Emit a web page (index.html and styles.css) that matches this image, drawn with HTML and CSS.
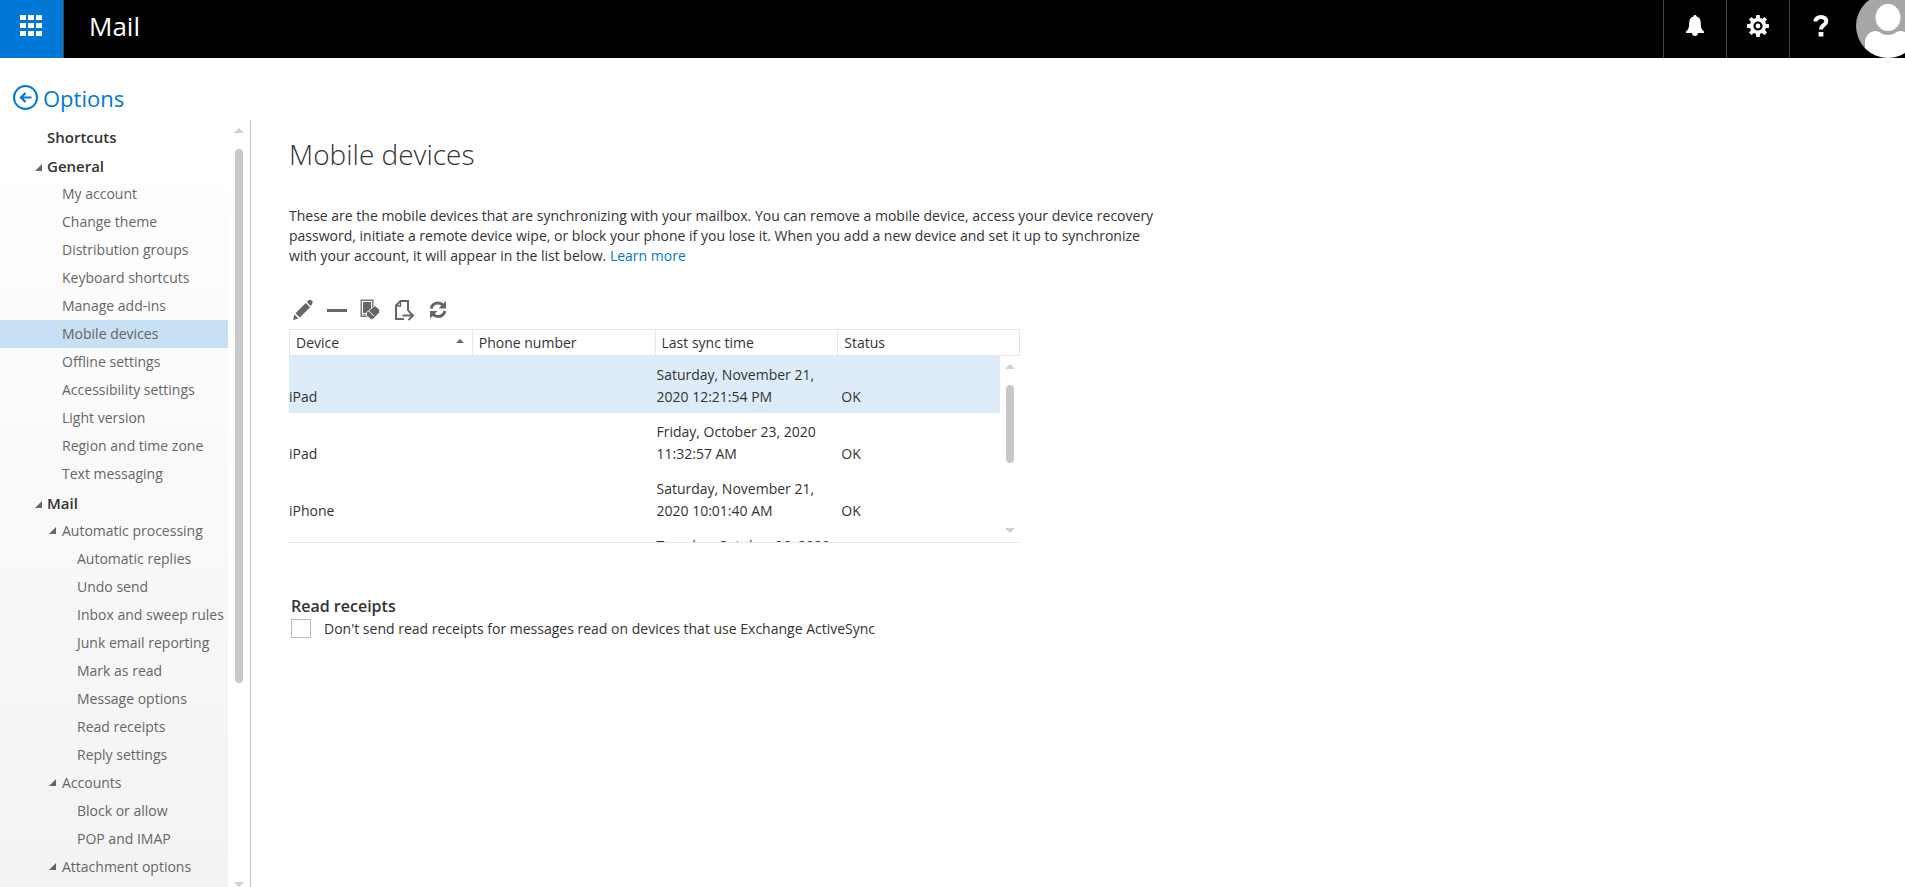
FILE: index.html
```html
<!DOCTYPE html>
<html lang="en">
<head>
  <meta charset="UTF-8">
  <title>Mail - Options</title>
  <meta name="viewport" content="width=device-width, initial-scale=1.0">
  <link rel="stylesheet" href="styles.css">
</head>
<body>
<header class="topbar">
  <button class="launcher" aria-label="App launcher">
    <svg width="23" height="22" viewBox="0 0 23 22" fill="#fff">
      <path d="M0 0h6v5H0zM8 0h6v5H8zM16 0h6v5h-6zM0 8h6v5H0zM8 8h6v5H8zM16 8h6v5h-6zM0 16h6v5H0zM8 16h6v5H8zM16 16h6v5h-6z"/>
    </svg>
  </button>
  <a class="brand" href="#">Mail</a>
  <div class="actions">
    <button class="action" aria-label="Notifications">
      <svg width="20" height="22" viewBox="0 0 20 22" fill="#fff">
        <path d="M10 0c1 0 1.600.7 1.600 1.600 2.800.8 4.200 3 4.200 6.200 0 4.700.8 7 3.200 8.600V18h-6a3 3 0 0 1-6 0H1v-1.600C3.400 14.800 4.200 12.500 4.200 7.800c0-3.200 1.400-5.400 4.200-6.200C8.400.7 9 0 10 0z"/>
      </svg>
    </button>
    <button class="action" aria-label="Settings">
      <svg width="22" height="22" viewBox="0 0 22 22">
        <g fill="#fff">
          <circle cx="11" cy="11" r="8.200"/>
          <path id="tooth" d="M8.800 4l.5-4h3.400l.5 4z"/>
          <use href="#tooth" transform="rotate(45 11 11)"/>
          <use href="#tooth" transform="rotate(90 11 11)"/>
          <use href="#tooth" transform="rotate(135 11 11)"/>
          <use href="#tooth" transform="rotate(180 11 11)"/>
          <use href="#tooth" transform="rotate(225 11 11)"/>
          <use href="#tooth" transform="rotate(270 11 11)"/>
          <use href="#tooth" transform="rotate(315 11 11)"/>
        </g>
        <circle cx="11" cy="11" r="3.500" fill="#fff" stroke="#000" stroke-width="2.200"/>
      </svg>
    </button>
    <button class="action" aria-label="Help">
      <svg width="16" height="22" viewBox="0 0 16 22">
        <path d="M2.500 6.500C2.500 3.500 5 2 8 2s5.300 1.500 5.300 4.500C13.300 10 8 10 8 14.500" fill="none" stroke="#fff" stroke-width="4"/>
        <path d="M5.600 17h4.800v4.500H5.600z" fill="#fff"/>
      </svg>
    </button>
    <button class="avatar" aria-label="Account">
      <svg width="64" height="64" viewBox="0 0 64 64">
        <circle cx="32" cy="32" r="32" fill="#a6a6a6"/>
        <ellipse cx="32" cy="23.500" rx="12.500" ry="13.500" fill="#fff"/>
        <path d="M9 54V49c0-7 4-12 11-12 3 0 6 4 12 4s9-4 12-4c7 0 11 5 11 12v5a32 32 0 0 1-46 0z" fill="#fff"/>
      </svg>
    </button>
  </div>
</header>

<a class="back" href="#">
  <svg width="25" height="25" viewBox="0 0 25 25" fill="none" stroke="#0078d7">
    <circle cx="12.500" cy="12.500" r="11.500" stroke-width="2"/>
    <path d="M18.500 12.500h-11M12.500 8l-4.500 4.500 4.500 4.500" stroke-width="2.200"/>
  </svg>
  <span>Options</span>
</a>

<div class="page">
  <aside class="sidebar">
    <nav class="nav">
      <a class="root" href="#">Shortcuts</a>
      <a class="root open" href="#">General</a>
      <div class="tree">
        <a href="#">My account</a>
        <a href="#">Change theme</a>
        <a href="#">Distribution groups</a>
        <a href="#">Keyboard shortcuts</a>
        <a href="#">Manage add-ins</a>
        <a class="selected" href="#">Mobile devices</a>
        <a href="#">Offline settings</a>
        <a href="#">Accessibility settings</a>
        <a href="#">Light version</a>
        <a href="#">Region and time zone</a>
        <a href="#">Text messaging</a>
        <a class="root open" href="#">Mail</a>
        <a class="open" href="#">Automatic processing</a>
        <a class="leaf" href="#">Automatic replies</a>
        <a class="leaf" href="#">Undo send</a>
        <a class="leaf" href="#">Inbox and sweep rules</a>
        <a class="leaf" href="#">Junk email reporting</a>
        <a class="leaf" href="#">Mark as read</a>
        <a class="leaf" href="#">Message options</a>
        <a class="leaf" href="#">Read receipts</a>
        <a class="leaf" href="#">Reply settings</a>
        <a class="open" href="#">Accounts</a>
        <a class="leaf" href="#">Block or allow</a>
        <a class="leaf" href="#">POP and IMAP</a>
        <a class="open" href="#">Attachment options</a>
      </div>
    </nav>
    <div class="scrollbar">
      <span class="up"></span>
      <span class="thumb"></span>
      <span class="down"></span>
    </div>
  </aside>

  <main class="content">
    <h1>Mobile devices</h1>
    <p class="intro">These are the mobile devices that are synchronizing with your mailbox. You can remove a mobile device, access your device recovery password, initiate a remote device wipe, or block your phone if you lose it. When you add a new device and set it up to synchronize with your account, it will appear in the list below. <a href="#">Learn more</a></p>

    <div class="toolbar">
      <button aria-label="Edit">
        <svg width="22" height="22" viewBox="0 0 22 22" fill="#666">
          <path d="M1 21l1.500-5.500 4 4zM3.500 14.200L13.800 4l4.300 4.200L7.800 18.500zM14.800 3l1.800-1.700c1-1 2.200-.8 3.200.2s1.200 2.300.2 3.300L19 7.200z"/>
        </svg>
      </button>
      <button aria-label="Remove">
        <svg width="22" height="22" viewBox="0 0 22 22" fill="#666"><path d="M1 10h20v3H1z"/></svg>
      </button>
      <button aria-label="Wipe device">
        <svg width="22" height="22" viewBox="0 0 22 22">
          <path d="M1.200 1.200h11.600v9L7 17.300H1.200z" fill="#fff" stroke="#777" stroke-width="1.400"/>
          <path d="M3 3h8v7l-4 4H3z" fill="#666"/>
          <path d="M3.500 15.500h2" stroke="#666"/>
          <path d="M15 6.500l4.500 4v3L13.500 20l-2.500.5-4.500-4V13.500z" fill="#666" stroke="#fff" stroke-width=".8"/>
          <path d="M8.500 11.700l5.500 5.500" stroke="#fff"/>
        </svg>
      </button>
      <button aria-label="Export">
        <svg width="22" height="22" viewBox="0 0 22 22" fill="none" stroke="#666" stroke-width="2">
          <path d="M14 12V2H6.500L2 6.500V20h8"/>
          <path d="M6.500 2.500v4.500H2.500" stroke-width="1.400"/>
          <path d="M8.500 16.500h10M14.500 12l4.500 4.500-4.500 4.500"/>
        </svg>
      </button>
      <button aria-label="Refresh">
        <svg width="22" height="22" viewBox="0 0 22 22">
          <path d="M3 9.500C4 6 6.500 4 10 4c2.500 0 4 1 5.500 2.500M17 12c-1 3.500-3.500 5.500-7 5.500-2.500 0-4-1-5.500-2.500" fill="none" stroke="#666" stroke-width="3"/>
          <path d="M18 2v7.500h-7.500zM2 19.500V12h7.500z" fill="#666"/>
        </svg>
      </button>
    </div>

    <div class="list">
      <table class="devices">
        <colgroup>
          <col class="col">
          <col class="col">
          <col class="col">
          <col>
          <col class="col-gutter">
        </colgroup>
        <thead>
          <tr>
            <th class="sorted" scope="col">Device</th>
            <th scope="col">Phone number</th>
            <th scope="col">Last sync time</th>
            <th scope="col" colspan="2">Status</th>
          </tr>
        </thead>
        <tbody>
          <tr class="selected"><td>iPad</td><td></td><td>Saturday, November 21, 2020 12:21:54 PM</td><td>OK</td><td class="gutter"></td></tr>
          <tr><td>iPad</td><td></td><td>Friday, October 23, 2020 11:32:57 AM</td><td>OK</td><td class="gutter"></td></tr>
          <tr><td>iPhone</td><td></td><td>Saturday, November 21, 2020 10:01:40 AM</td><td>OK</td><td class="gutter"></td></tr>
          <tr><td></td><td></td><td>Tuesday, October 06, 2020</td><td></td><td class="gutter"></td></tr>
        </tbody>
      </table>
      <div class="scrollbar list-scroll">
        <span class="up"></span>
        <span class="thumb"></span>
        <span class="down"></span>
      </div>
    </div>

    <section class="receipts">
      <h2>Read receipts</h2>
      <div class="check">
        <input type="checkbox" id="no-receipts">
        <label for="no-receipts">Don't send read receipts for messages read on devices that use Exchange ActiveSync</label>
      </div>
    </section>
  </main>
</div>
</body>
</html>
```
FILE: styles.css
```css
* { box-sizing: border-box; }

body {
  margin: 0;
  height: 100vh;
  display: flex;
  flex-direction: column;
  overflow: hidden;
  background: #fff;
  color: #333;
  font-family: "Open Sans", "Noto Sans", sans-serif;
  font-size: 14px;
}

a {
  color: #0078d7;
  text-decoration: none;
}

button {
  padding: 0;
  border: none;
  background: none;
  cursor: pointer;
}

svg { display: block; }

/* top bar */
.topbar {
  display: flex;
  flex: none;
  height: 58px;
  overflow: hidden;
  background: #000;
}

.launcher {
  width: 64px;
  padding: 0 0 7px 20px;
  background: #0078d7;
  border-right: 1px solid #444;
}

.brand {
  padding-left: 25px;
  color: #fff;
  font-size: 26px;
  line-height: 52px;
}

.actions {
  display: flex;
  margin-left: auto;
}

.action {
  display: flex;
  justify-content: center;
  width: 63px;
  padding-top: 15px;
  border-left: 1px solid #444;
}

.avatar {
  display: flex;
  align-items: flex-start;
  width: 53px;
  padding-left: 4px;
  overflow: hidden;
}

.avatar svg {
  flex: none;
  margin-top: -6px;
}

.back {
  display: flex;
  flex: none;
  align-items: center;
  gap: 5px;
  height: 62px;
  padding: 17px 0 0 13px;
  font-size: 22px;
}

.page {
  display: flex;
  flex: 1;
  min-height: 0;
}

/* options tree */
.sidebar {
  display: flex;
  flex: none;
  width: 251px;
  overflow: hidden;
  border-right: 1px solid #c6c6c6;
}

.nav {
  display: flex;
  flex-direction: column;
  width: 228px;
  padding-top: 2px;
}

.nav a {
  display: block;
  flex: none;
  position: relative;
  padding-left: 62px;
  color: #666;
  line-height: 28px;
  white-space: nowrap;
}

.nav .root {
  padding: 2px 0 0 47px;
  color: #333;
  font-size: 15px;
  font-weight: 600;
  line-height: 27px;
}

.nav .leaf { padding-left: 77px; }

.nav .selected { background: #c7e0f4; }

.open::before {
  content: "";
  position: absolute;
  left: 49px;
  top: 10px;
  border-left: 7px solid transparent;
  border-bottom: 7px solid #666;
}

.root.open::before {
  left: 35px;
  top: 13px;
}

.tree {
  flex: 1;
  background: linear-gradient(#fefefe, #f3f3f3);
}

/* scrollbars */
.scrollbar {
  display: flex;
  flex-direction: column;
  align-items: center;
  width: 22px;
  padding-top: 8px;
}

.up,
.down {
  border: 5px solid transparent;
}

.up {
  border-top: none;
  border-bottom-color: #ccd1d5;
}

.down {
  border-bottom: none;
  border-top-color: #ccd1d5;
  margin-top: auto;
}

.thumb {
  width: 8px;
  height: 534px;
  margin-top: 16px;
  border-radius: 4px;
  background: #c8c8c8;
}

/* main column */
.content {
  flex: 1;
  padding: 15px 38px 0;
}

h1 {
  margin: 0;
  font-size: 28px;
  font-weight: 300;
  line-height: 38px;
}

.intro {
  max-width: 882px;
  margin: 33px 0;
  line-height: 20px;
}

.toolbar {
  display: flex;
  gap: 12px;
  padding: 0 3px 8px;
}

.list {
  position: relative;
  width: 731px;
  max-width: 100%;
  height: 214px;
  overflow: hidden;
  border-bottom: 1px solid #e6e6e6;
}

.devices {
  width: 100%;
  table-layout: fixed;
  border-collapse: separate;
  border-spacing: 0;
}

.col { width: 25%; }
.col-gutter { width: 20px; }

.devices th {
  height: 27px;
  padding: 0 0 0 6px;
  border: 1px solid #e6e6e6;
  border-right: none;
  font-weight: 400;
  text-align: left;
}

.devices th:last-child { border-right: 1px solid #e6e6e6; }

.sorted::after {
  content: "";
  float: right;
  margin: 6px 8px 0 0;
  border: 4px solid transparent;
  border-top: none;
  border-bottom-color: #666;
}

.devices td {
  padding: 8px 0 5px;
  line-height: 22px;
  vertical-align: bottom;
}

.devices td:nth-child(3) { padding-left: 2px; }
.devices td:nth-child(4) { padding-left: 4px; }

.devices .selected td { background: #deecf9; }
.devices .selected .gutter { background: none; }

.list-scroll {
  position: absolute;
  top: 27px;
  right: 0;
  bottom: 9px;
  width: 20px;
}

.list-scroll .thumb {
  height: 78px;
  margin-top: 16px;
}

.receipts { padding: 51px 2px 0; }

h2 {
  margin: 0;
  font-size: 16px;
  font-weight: 600;
  line-height: 25px;
}

.check {
  display: flex;
  align-items: center;
  gap: 13px;
}

.check input {
  appearance: none;
  width: 20px;
  height: 19px;
  margin: 0;
  border: 1px solid #bbb;
}
```
